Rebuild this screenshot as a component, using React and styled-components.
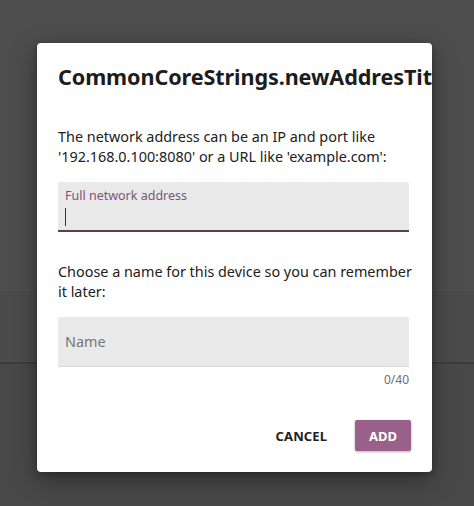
import React from "react";
import styled, { createGlobalStyle } from "styled-components";

const Global = createGlobalStyle`
  html, body { margin: 0; padding: 0; }
  body {
    font-family: "Noto Sans", "Open Sans", sans-serif;
    background: #4c4c4c;
    width: 474px;
    height: 506px;
    overflow: hidden;
  }
`;

const Page = styled.div`
  position: relative;
  width: 474px;
  height: 506px;
  background: #4d4d4d;
  display: flex;
  flex-direction: column;
`;

const PageHeader = styled.div`
  height: 292px;
  border-bottom: 1px solid #464646;
`;

const PageRow = styled.div`
  height: 69px;
  background: #4b4b4b;
  border-bottom: 2px solid #3c3c3c;
`;

const PageRest = styled.div`
  flex: 1;
  background: #484848;
`;

const Overlay = styled.div`
  position: absolute;
  inset: 0;
  display: flex;
  align-items: flex-start;
  justify-content: flex-start;
  padding: 43px 0 0 37px;
  box-sizing: border-box;
`;

const Dialog = styled.div`
  width: 395px;
  height: 429px;
  box-sizing: border-box;
  background: #ffffff;
  border-radius: 4px;
  box-shadow: 0 8px 24px rgba(0, 0, 0, 0.35), 0 2px 6px rgba(0, 0, 0, 0.25);
  overflow: hidden;
  padding: 19px 23px 21px 21px;
  display: flex;
  flex-direction: column;
`;

const Title = styled.h1`
  margin: 0 -40px 0 0;
  font-size: 21.6px;
  line-height: 30px;
  font-weight: 700;
  color: #1c1c1c;
  letter-spacing: -0.1px;
  white-space: nowrap;
`;

const Text = styled.p`
  margin: ${(p) => p.$mt}px -10px 0 0;
  font-size: 14.4px;
  line-height: 20px;
  color: #212121;
`;

const Field = styled.div`
  margin-top: ${(p) => p.$mt}px;
  height: 50px;
  box-sizing: border-box;
  background: #e9e9e9;
  border-radius: 2px 2px 0 0;
  border-bottom: ${(p) => (p.$focused ? "2px solid #5e3e56" : "1px solid #d9d9d9")};
  padding: 0 8px 0 7px;
  display: flex;
  flex-direction: column;
  justify-content: ${(p) => (p.$focused ? "flex-start" : "center")};
`;

const FloatLabel = styled.span`
  margin-top: 5px;
  font-size: 12.5px;
  line-height: 17px;
  color: #7d5572;
`;

const Caret = styled.span`
  display: block;
  margin-top: 4px;
  width: 1px;
  height: 18px;
  background: #333;
`;

const Placeholder = styled.span`
  font-size: 14.4px;
  line-height: 20px;
  color: #757575;
  margin-top: 1px;
`;

const Counter = styled.div`
  margin-top: 5px;
  text-align: right;
  font-size: 12px;
  line-height: 16px;
  color: #6e6e6e;
`;

const Actions = styled.div`
  margin-top: auto;
  display: flex;
  justify-content: flex-end;
  align-items: center;
  gap: 12px;
  margin-right: -2px;
`;

const FlatButton = styled.button`
  border: none;
  background: transparent;
  font-family: inherit;
  font-size: 13px;
  font-weight: 700;
  color: #212121;
  height: 31px;
  padding: 0 16px;
  letter-spacing: 0.1px;
`;

const RaisedButton = styled.button`
  border: none;
  border-radius: 2px;
  background: #996189;
  color: #ffffff;
  font-family: inherit;
  font-size: 13px;
  font-weight: 700;
  width: 56px;
  height: 31px;
  padding: 0;
  box-shadow: 0 1px 3px rgba(0, 0, 0, 0.3);
`;

export default function App() {
  return (
    <>
      <Global />
      <Page>
        <PageHeader />
        <PageRow />
        <PageRest />
        <Overlay>
          <Dialog>
            <Title>CommonCoreStrings.newAddresTitle</Title>
            <Text $mt={35}>
              The network address can be an IP and port like
              '192.168.0.100:8080' or a URL like 'example.com':
            </Text>
            <Field $mt={15} $focused>
              <FloatLabel>Full network address</FloatLabel>
              <Caret />
            </Field>
            <Text $mt={30}>
              Choose a name for this device so you can remember it later:
            </Text>
            <Field $mt={15}>
              <Placeholder>Name</Placeholder>
            </Field>
            <Counter>0/40</Counter>
            <Actions>
              <FlatButton>CANCEL</FlatButton>
              <RaisedButton>ADD</RaisedButton>
            </Actions>
          </Dialog>
        </Overlay>
      </Page>
    </>
  );
}
